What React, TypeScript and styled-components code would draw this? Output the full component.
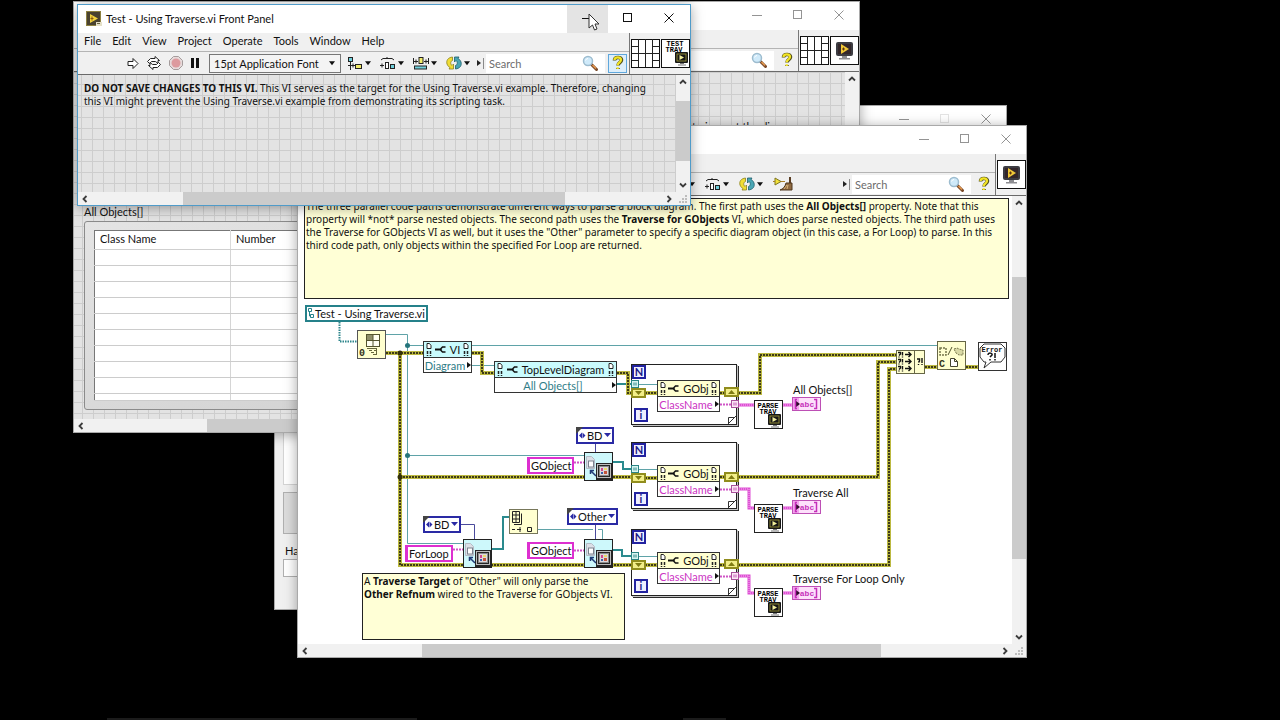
import React from "react";
import styled, { createGlobalStyle, css } from "styled-components";

const GlobalStyle = createGlobalStyle`
  * { box-sizing: border-box; }
  body { margin: 0; background: #000; }
  button, input, select { font: inherit; color: inherit; margin: 0; padding: 0; border: 0; border-radius: 0; background: none; }
  svg { flex: none; }
`;

const Desktop = styled.main`
  position: relative;
  min-height: 100vh;
  overflow: hidden;
  background: #000;
  color: #111;
  font: 11px/13px Lato, "Open Sans", sans-serif;
  font-variant-ligatures: none;
`;

/* ---------- window chrome ---------- */

const Win = styled.section<{ $x: number; $y: number; $w: number; $h: number; $active?: boolean }>`
  position: absolute;
  left: ${(p) => p.$x}px;
  top: ${(p) => p.$y}px;
  width: ${(p) => p.$w}px;
  min-height: ${(p) => p.$h}px;
  display: flex;
  flex-direction: column;
  background: #f0f0f0;
  border: 1px solid ${(p) => (p.$active ? "#4f9bc9" : "#a9a9a9")};
  box-shadow: 0 2px 12px rgba(0, 0, 0, 0.35);
`;

const TitleBar = styled.header`
  display: flex;
  align-items: center;
  height: 28px;
  padding-left: 8px;
  background: #fff;
  flex: none;
`;

const Title = styled.h1`
  margin: 0 auto 0 4px;
  padding-bottom: 1px;
  font-size: 11px;
  font-weight: 400;
  white-space: nowrap;
`;

const CaptionGroup = styled.div`
  display: flex;
  margin-left: auto;
  height: 100%;
`;

const CaptionButton = styled.button<{ $hover?: boolean; $faint?: boolean; $dim?: boolean }>`
  && {
    width: 41px;
    padding-bottom: 2px;
    display: grid;
    place-items: center;
    background: ${(p) => (p.$hover ? "#e4e4e4" : "transparent")};
    color: ${(p) => (p.$faint ? "#e4e4e4" : p.$dim ? "#949494" : "#111")};
  }
`;

const Chrome = styled.div`
  display: flex;
  border-bottom: 1px solid #6a6a6a;
  flex: none;
`;

const ChromeMain = styled.div`
  flex: 1;
  min-width: 0;
`;

const MenuBar = styled.nav`
  display: flex;
  gap: 11px;
  height: 19px;
  padding: 0 0 3px 6px;
  border-bottom: 1px solid #b4b4b4;
`;

const MenuItem = styled.button`
  white-space: nowrap;
`;

const Toolbar = styled.div`
  display: flex;
  align-items: center;
  height: 22px;
  padding-right: 2px;
`;

const ToolGroup = styled.div<{ $start: number; $gap: number }>`
  display: flex;
  align-items: center;
  gap: ${(p) => p.$gap}px;
  margin-left: ${(p) => p.$start}px;
`;

const ToolButton = styled.button`
  display: flex;
  align-items: center;
  gap: 2px;
`;

const SelectWrap = styled.label`
  position: relative;
  display: flex;
  margin-left: 10px;

  svg {
    position: absolute;
    right: 6px;
    top: 7px;
    pointer-events: none;
  }
`;

const FontSelect = styled.select`
  && {
    appearance: none;
    width: 132px;
    height: 19px;
    padding: 0 14px 0 4px;
    border: 1px solid #777;
    background: #f4f4f4;
  }
`;

const SearchGroup = styled.div`
  display: flex;
  align-items: center;
  margin-left: auto;
`;

const SearchDivider = styled.span`
  width: 1px;
  height: 11px;
  margin: 0 2px;
  background: #8a8a8a;
`;

const SearchField = styled.label`
  display: flex;
  align-items: center;
  width: 119px;
  height: 19px;
  padding: 0 7px 0 3px;
  background: #fff;

  input {
    width: 93px;
    outline: 0;
  }
  input::placeholder {
    color: #6c6c6c;
    opacity: 1;
  }
`;

const HelpButton = styled.button<{ $on?: boolean }>`
  && {
    display: grid;
    place-items: center;
    width: 19px;
    height: 19px;
    margin-left: 3px;
    border: 1px solid ${(p) => (p.$on ? "#5fa7dc" : "transparent")};
    background: ${(p) => (p.$on ? "#ddeefa" : "transparent")};
  }
`;

const IconPane = styled.div`
  display: flex;
  align-items: flex-start;
  padding: 5px 0 0 1px;
  border-left: 1px solid #777;
`;

const Body = styled.div`
  display: grid;
  grid-template-columns: minmax(0, 1fr) 14px;
  flex: 1;
`;

const panelGrid = css<{ $gx: number; $gy: number }>`
  background-color: #e3e3e3;
  background-image: linear-gradient(to right, #cdcdcd 1px, transparent 1px),
    linear-gradient(to bottom, #cdcdcd 1px, transparent 1px);
  background-size: 11px 11px;
  background-position: ${(p) => p.$gx}px ${(p) => p.$gy}px;
`;

const Panel = styled.div<{ $gx: number; $gy: number }>`
  overflow: hidden;
  ${panelGrid}
`;

const VBar = styled.div`
  display: flex;
  flex-direction: column;
  align-items: center;
  justify-content: space-between;
  background: #f1f1f1;
`;

const HBar = styled.div`
  display: flex;
  align-items: center;
  justify-content: space-between;
  height: 13px;
  background: #f1f1f1;
  flex: none;
`;

const ScrollButton = styled.button`
  display: grid;
  place-items: center;
  width: 14px;
  height: 14px;
  color: #3c3c3c;
`;

const Track = styled.div<{ $from: number; $size: number; $vertical?: boolean }>`
  flex: 1;
  align-self: stretch;
  display: flex;
  flex-direction: ${(p) => (p.$vertical ? "column" : "row")};

  &::before {
    content: "";
    flex: none;
    ${(p) => (p.$vertical ? "height" : "width")}: ${(p) => p.$from}%;
  }
  &::after {
    content: "";
    flex: none;
    background: #cbcbcb;
    ${(p) => (p.$vertical ? "height" : "width")}: ${(p) => p.$size}%;
  }
`;

const Line = styled.span`
  display: block;
  white-space: nowrap;
`;

/* ---------- panel contents ---------- */

const noteText = css`
  font-family: "Noto Sans", "Open Sans", sans-serif;
  font-size: 10px;
`;

const FrontNote = styled.p`
  margin: 0;
  padding: 7px 0 0 6px;
  ${noteText}
`;

const Hint = styled.p`
  margin: 0 0 72px;
  padding: 48px 0 0 618px;
  white-space: nowrap;
`;

const ListLabel = styled.div`
  margin: 0 0 3px 10px;
`;

const ListFrame = styled.div`
  margin: 0 24px 0 10px;
  padding: 8px 10px 8px 9px;
  border: 1px solid #8b8b8b;
  border-radius: 3px;
  background: linear-gradient(160deg, #e4e4e4, #c9c9c9);
`;

const ListTable = styled.table`
  width: 100%;
  border-collapse: collapse;
  table-layout: fixed;
  background: #fff;
  border-left: 1px solid #777;
  border-top: 1px solid #777;

  th {
    height: 19px;
    padding: 0 5px 3px;
    text-align: left;
    font-weight: 400;
    border-right: 1px solid #dadada;
    border-bottom: 1px solid #cfcfcf;
  }
  th:first-child {
    width: 136px;
  }
  td {
    height: 16px;
    padding: 0;
    border-right: 1px solid #d5d5d5;
    border-bottom: 1px solid #cccccc;
  }
  tr:last-child td {
    height: 7px;
  }
`;

const Dialog = styled.div`
  flex: 1;
  display: flex;
  flex-direction: column;
  justify-content: flex-end;
  padding: 0 9px 32px 8px;
`;

const DialogList = styled.div`
  height: 300px;
  border: 1px solid #d4d4d4;
  background: #fff;
`;

const DialogButton = styled.button`
  && {
    height: 42px;
    margin: 7px 0 10px;
    border: 1px solid #b0b0b0;
    background: #dcdcdc;
  }
`;

const DialogField = styled.label`
  display: flex;
  flex-direction: column;
  gap: 2px;
  padding-left: 2px;

  input {
    height: 18px;
    margin-left: -2px;
    border: 1px solid #b0b0b0;
    background: #fff;
  }
`;

/* ---------- block diagram ---------- */

/* Scroll position of the diagram inside its window. */
const ORIGIN = { x: 298, y: 196 };

const Canvas = styled.div`
  position: relative;
  overflow: hidden;
  background: #fff;
`;

const Wires = styled.svg`
  position: absolute;
  left: 0;
  top: 0;
`;

interface Spot {
  $x: number;
  $y: number;
}

const spot = css<Spot>`
  position: absolute;
  left: ${(p) => p.$x - ORIGIN.x}px;
  top: ${(p) => p.$y - ORIGIN.y}px;
`;

const Comment = styled.p<Spot & { $w: number; $h: number }>`
  ${spot}
  ${noteText}
  margin: 0;
  width: ${(p) => p.$w}px;
  height: ${(p) => p.$h}px;
  padding: 1px;
  border: 1px solid #222;
  background: #ffffd6;
`;

const RefConstant = styled.div<Spot>`
  ${spot}
  display: flex;
  align-items: center;
  gap: 1px;
  width: 123px;
  height: 17px;
  padding-left: 1px;
  border: 2px solid #25818a;
  background: #fff;
  white-space: nowrap;
`;

const Property = styled.div<Spot & { $w: number; $cream?: boolean; $ink: string }>`
  ${spot}
  width: ${(p) => p.$w}px;
  height: 32px;
  border: 1px solid #333;
  background: #fff;

  > div:first-child {
    display: flex;
    align-items: center;
    justify-content: space-between;
    height: 16px;
    padding: 0 2px;
    border-bottom: 1px solid #333;
    background: ${(p) => (p.$cream ? "#ffffd0" : "#c9fbfd")};
  }
  > div:last-child {
    display: flex;
    align-items: center;
    justify-content: flex-end;
    gap: 1px;
    height: 14px;
    color: ${(p) => p.$ink};
    white-space: nowrap;
  }
`;

const PropName = styled.span`
  display: flex;
  align-items: center;
  gap: 4px;
  white-space: nowrap;
`;

const PropField = styled.span`
  flex: 1;
  text-align: center;
`;

const LoopFrame = styled.div<Spot & { $h: number }>`
  ${spot}
  width: 106px;
  height: ${(p) => p.$h}px;
  border: 1px solid #222;
  box-shadow: 1px 1px 0 #c4c4c4, 2px 2px 0 #2a2a2a;
  display: flex;
  flex-direction: column;
  justify-content: space-between;
  padding-bottom: 2px;
`;

const Terminal = styled.span<{ $inset?: boolean }>`
  display: grid;
  place-items: center;
  width: 14px;
  height: 14px;
  margin-left: ${(p) => (p.$inset ? 2 : 0)}px;
  border: 2px solid #2222a0;
  background: #eef;
  color: #1a1a88;
  font-size: 11px;
  line-height: 10px;
  font-weight: 700;
`;

const NodeIcon = styled.svg<Spot>`
  ${spot}
  overflow: visible;
`;

const StringConstant = styled.input<Spot & { $w: number }>`
  && {
    ${spot}
    width: ${(p) => p.$w}px;
    height: 17px;
    padding: 0 0 0 1px;
    border: 2px solid #dd2fd0;
    border-left-width: 3px;
    background: #fff;
    outline: 0;
  }
`;

const RingLabel = styled.label<Spot & { $w: number }>`
  ${spot}
  width: ${(p) => p.$w}px;
  height: 17px;

  select {
    appearance: none;
    width: 100%;
    height: 100%;
    padding: 0 0 0 9px;
    border: 2px solid #2a2aa4;
    background: #fff;
  }
  svg {
    position: absolute;
    left: 0;
    top: 0;
    pointer-events: none;
  }
`;

const WireLabel = styled.span<Spot>`
  ${spot}
  white-space: nowrap;
`;

const Cursor = styled.svg`
  position: absolute;
  left: 588px;
  top: 13px;
`;

const TaskEdge = styled.footer`
  position: absolute;
  left: 107px;
  bottom: 0;
  display: flex;
  gap: 266px;

  span {
    width: 310px;
    height: 2px;
    background: #1b1b1b;
  }
  span + span {
    width: 43px;
  }
`;

/* ---------- icons ---------- */

const Caret = ({ color = "#111", size = 7 }: { color?: string; size?: number }) => (
  <svg width={size} height="5" viewBox="0 0 7 5">
    <path d="M0 0h7L3.5 4.5z" fill={color} />
  </svg>
);

const AppIcon = () => (
  <svg width="16" height="16" viewBox="0 0 16 16">
    <rect x="0.5" y="0.5" width="14" height="14" fill="#4a4230" stroke="#8d8141" />
    <path d="M4 3v9l8-4.5z" fill="#f3d33c" />
    <path d="M6 5.5v4M4.5 7.500h3" stroke="#8a5a10" />
    <path d="M10 11h6v4h-6z" fill="#e5e0c8" />
    <path d="M11 12.500h3" stroke="#6c6440" />
  </svg>
);

const Magnifier = () => (
  <svg width="16" height="16" viewBox="0 0 16 16">
    <path d="M9.500 9.500l5 5" stroke="#7a4a2a" strokeWidth="3" strokeLinecap="round" />
    <path d="M10.500 10l3.500 3.500" stroke="#e79a4e" strokeWidth="1.500" />
    <circle cx="6" cy="6" r="4.500" fill="#cfeafa" stroke="#9dbccf" strokeWidth="1.500" />
    <path d="M3.500 5.500a3 3 0 0 1 2.500-2" stroke="#fff" fill="none" />
  </svg>
);

const Question = () => (
  <svg width="12" height="16" viewBox="0 0 12 16">
    <path d="M2.500 5.500C2.500 1.500 9.500 1.500 9.500 5c0 2.500-3.500 2.500-3.500 5.500M6 13v1" fill="none" stroke="#55521c" strokeWidth="3.600" />
    <path d="M2.500 5C2.500 1.500 9 1.500 9 5c0 2.300-3.300 2.500-3.300 5.300M5.700 12.300v1.700" fill="none" stroke="#f2e424" strokeWidth="2.200" />
  </svg>
);

const RunIcon = () => (
  <svg width="12" height="13" viewBox="0 0 12 13">
    <path d="M1 4.500h5V1.500l5 5-5 5v-3H1z" fill="#fff" stroke="#222" />
  </svg>
);

const RunContinuousIcon = () => (
  <svg width="14" height="14" viewBox="0 0 14 14">
    <path d="M.5 5.500L3.500 2.500h4.500V.5l4.500 4H11v3L8.500 5.500h-4L2.500 7.500z" fill="#fff" stroke="#222" strokeLinejoin="round" />
    <path d="M13.500 8.500l-3 3H6v2l-4.500-4H3v-3L5.500 8.500h4l2-2z" fill="#fff" stroke="#222" strokeLinejoin="round" />
  </svg>
);

const AbortIcon = () => (
  <svg width="14" height="14" viewBox="0 0 14 14">
    <path d="M4.500 .5h5l4 4v5l-4 4h-5l-4-4v-5z" fill="#e6dada" stroke="#a59c9c" />
    <circle cx="7" cy="7" r="4.500" fill="#dd9a9e" />
  </svg>
);

const PauseIcon = () => (
  <svg width="8" height="10" viewBox="0 0 8 10">
    <path d="M0 0h3v10H0zM5 0h3v10H5z" fill="#111" />
  </svg>
);

const AlignIcon = () => (
  <svg width="15" height="13" viewBox="0 0 15 13">
    <path d="M2.500 4v9M0 8.500h7M5 6.500v4" stroke="#222" fill="none" />
    <rect x="0.5" y="0.5" width="4" height="4" fill="#6fd0dc" stroke="#222" />
    <rect x="7.500" y="7.500" width="6" height="4" fill="#f2ec6a" stroke="#222" />
  </svg>
);

const DistributeIcon = () => (
  <svg width="16" height="13" viewBox="0 0 16 13">
    <path d="M1 3l2-1.500h9L14 3M7 0v1.500" stroke="#222" fill="none" />
    <path d="M0 8.500h4M2 6.500v4" stroke="#222" />
    <rect x="5.500" y="5.500" width="3" height="6" fill="#fff" stroke="#222" />
    <rect x="10.500" y="7.500" width="4" height="4" fill="#6fd0dc" stroke="#222" />
  </svg>
);

const ResizeIcon = () => (
  <svg width="16" height="13" viewBox="0 0 16 13">
    <path d="M.5 1v6M15.500 1v6M1 4.500h4M11 4.500h4M3 2.500v4M13 2.500v4" stroke="#222" fill="none" />
    <rect x="6" y="0.5" width="4" height="6" fill="#f2ec6a" stroke="#222" />
    <rect x="1.500" y="9" width="12" height="3" fill="#6fd0dc" stroke="#222" />
  </svg>
);

const ReorderIcon = () => (
  <svg width="16" height="14" viewBox="0 0 16 14">
    <path d="M6.500 1C2 1.500 0 4.500 1 8c.7 2 2 3 3 3.500L3 13h4.500V8L6 9.500C4 8 4.500 5 6.500 4.500z" fill="#f0dd35" stroke="#8a8120" strokeWidth="0.800" />
    <path d="M9.500 13c4.500-.5 6.500-3.500 5.500-7-.7-2-2-3-3-3.500L13 1H8.500v5L10 4.500C12 6 11.500 9 9.500 9.500z" fill="#4aa6b4" stroke="#1d5e6b" strokeWidth="0.800" />
  </svg>
);

const CleanupIcon = () => (
  <svg width="20" height="14" viewBox="0 0 20 14">
    <path d="M2 1v7l6-3.500z" fill="#f3e23a" stroke="#7d7420" />
    <path d="M0 4.500h2M8 4.500h4" stroke="#a98028" />
    <path d="M17 0v6" stroke="#5a3d22" strokeWidth="2" />
    <path d="M13 6h6v7H7c3-1 5-3 6-7z" fill="#8f6a41" stroke="#4e361e" />
    <path d="M11 12l3-4M14 12l1-4" stroke="#d9b27a" />
  </svg>
);

const PaneIcon = () => (
  <svg width="30" height="30" viewBox="0 0 30 30">
    <rect x="0.5" y="1.500" width="28" height="28" fill="#fff" stroke="#111" />
    <path d="M7.500 1v28M14.500 1v28M21.500 1v28M7 15.500h15M1 8.500h7M1 15.500h7M1 22.500h7M21 8.500h8M21 15.500h8M21 22.500h8" stroke="#222" fill="none" />
  </svg>
);

const ViIcon = () => (
  <svg width="29" height="30" viewBox="0 0 29 30">
    <rect x="0.5" y="1.500" width="28" height="28" fill="#fff" stroke="#111" />
    <rect x="6" y="7" width="17" height="14" rx="2" fill="#3c3c42" />
    <rect x="8" y="9" width="13" height="10" fill="#33262a" />
    <path d="M11 9v10l8-5z" fill="#f0c838" />
    <path d="M12 14h3M13.500 12.500v3" stroke="#5e3410" />
    <path d="M12 21h5v2h3v1.500H9V23h3z" fill="#8e8e92" />
  </svg>
);

const SmallMonitor = () => (
  <>
    <rect x="14" y="14" width="13" height="11" rx="1" fill="#161616" />
    <rect x="16" y="16" width="9" height="7" fill="none" stroke="#a9a13a" strokeWidth="0.800" />
    <path d="M18.500 17v5l4.500-2.500z" fill="#f2ef9a" />
    <path d="M17 27h8M19 25.500h4" stroke="#777" />
  </>
);

const tinyText = {
  fontFamily: "Liberation Mono, monospace",
  fontWeight: 700,
  fontSize: 7,
  textAnchor: "middle" as const,
};

const TestTravIcon = () => (
  <svg width="29" height="30" viewBox="0 0 29 30">
    <rect x="0.5" y="1.500" width="28" height="28" fill="#fff" stroke="#111" />
    <text x="14" y="8" {...tinyText}>TEST</text>
    <text x="13" y="14" {...tinyText}>TRAV</text>
    <SmallMonitor />
  </svg>
);

const Chevron = ({ dir }: { dir: "up" | "down" | "left" | "right" }) => {
  const d = {
    up: "M1 5.500L4 2.500l3 3",
    down: "M1 2.500l3 3 3-3",
    left: "M5.500 1l-3 3 3 3",
    right: "M2.500 1l3 3-3 3",
  }[dir];
  return (
    <svg width="8" height="8" viewBox="0 0 8 8">
      <path d={d} fill="none" stroke="currentColor" strokeWidth="1.800" />
    </svg>
  );
};

const Grip = () => (
  <svg width="10" height="10" viewBox="0 0 10 10">
    <path d="M7 1h2v2H7zM7 4h2v2H7zM7 7h2v2H7zM4 4h2v2H4zM4 7h2v2H4zM1 7h2v2H1z" fill="#bdbdbd" />
  </svg>
);

/* ---------- shared pieces ---------- */

const Captions = ({ hover, faintMax, dim }: { hover?: boolean; faintMax?: boolean; dim?: boolean }) => (
  <CaptionGroup>
    <CaptionButton aria-label="Minimize" $hover={hover} $dim={dim}>
      <svg width="10" height="10"><path d="M0 5.500h10" stroke="currentColor" /></svg>
    </CaptionButton>
    <CaptionButton aria-label="Maximize" $faint={faintMax} $dim={dim}>
      <svg width="10" height="10"><rect x="0.5" y="0.5" width="8" height="8" fill="none" stroke="currentColor" /></svg>
    </CaptionButton>
    <CaptionButton aria-label="Close" $dim={dim}>
      <svg width="10" height="10"><path d="M.5.5l9 9M9.500.5l-9 9" stroke="currentColor" /></svg>
    </CaptionButton>
  </CaptionGroup>
);

const Search = ({ helpOn }: { helpOn?: boolean }) => (
  <SearchGroup>
    <svg width="4" height="6"><path d="M0 0v6l4-3z" fill="#222" /></svg>
    <SearchDivider />
    <SearchField>
      <input type="text" placeholder="Search" aria-label="Search" />
      <Magnifier />
    </SearchField>
    <HelpButton $on={helpOn} aria-label="Context help"><Question /></HelpButton>
  </SearchGroup>
);

const VScroll = ({ from, size }: { from: number; size: number }) => (
  <VBar>
    <ScrollButton aria-label="Scroll up"><Chevron dir="up" /></ScrollButton>
    <Track $vertical $from={from} $size={size} />
    <ScrollButton aria-label="Scroll down"><Chevron dir="down" /></ScrollButton>
  </VBar>
);

const HScroll = ({ from, size }: { from: number; size: number }) => (
  <HBar>
    <ScrollButton aria-label="Scroll left"><Chevron dir="left" /></ScrollButton>
    <Track $from={from} $size={size} />
    <ScrollButton aria-label="Scroll right"><Chevron dir="right" /></ScrollButton>
    <ScrollButton as="span"><Grip /></ScrollButton>
  </HBar>
);

/* ---------- diagram nodes ---------- */

const PortMarks = () => (
  <svg width="6" height="14" viewBox="0 0 6 14">
    <path d="M1 .5h2.500l1.500 2V5.500H1z" fill="#fff" stroke="#222" />
    <path d="M1.500 8v3M1.500 12v1M4.500 8v3M4.500 12v1" stroke="#222" strokeWidth="1.500" />
  </svg>
);

const Plug = () => (
  <svg width="11" height="7" viewBox="0 0 11 7">
    <path d="M0 3.500h6" stroke="#111" strokeWidth="2" />
    <path d="M10.500 1H7.500L6 2.500v2L7.500 6h3" fill="none" stroke="#111" strokeWidth="1.500" />
  </svg>
);

interface PropertyProps {
  x: number;
  y: number;
  w: number;
  name: string;
  field: string;
  cream?: boolean;
  ink?: string;
}

const PropertyNode = ({ x, y, w, name, field, cream, ink = "#2f7d87" }: PropertyProps) => (
  <Property $x={x} $y={y} $w={w} $cream={cream} $ink={ink}>
    <div>
      <PortMarks />
      <PropName><Plug />{name}</PropName>
      <PortMarks />
    </div>
    <div>
      <PropField>{field}</PropField>
      <svg width="4" height="6"><path d="M0 0v6l4-3z" fill="#111" /></svg>
    </div>
  </Property>
);

const ForLoop = ({ y, node, h }: { y: number; node: number; h: number }) => (
  <>
    <LoopFrame $x={631} $y={y} $h={h}>
      <Terminal>N</Terminal>
      <Terminal $inset>i</Terminal>
    </LoopFrame>
    <PropertyNode x={657} y={node} w={63} name="GObj" field="ClassName" cream ink="#cb33c3" />
    <NodeIcon $x={631} $y={node} width="109" height="48" viewBox="0 0 109 48">
      <rect x="0.5" y="0.5" width="7" height="7" fill="#d8f4f0" stroke="#2a8585" />
      <path d="M3 2.500v3M5 2.500v3" stroke="#2a8585" />
      <rect x="1" y="9" width="13" height="8" fill="#f2ee88" stroke="#918d1d" strokeWidth="2" />
      <path d="M4 11h7l-3.500 4z" fill="#807c12" />
      <rect x="94" y="8" width="13" height="8" fill="#f2ee88" stroke="#918d1d" strokeWidth="2" />
      <path d="M97 14h7l-3.500-4z" fill="#807c12" />
      <rect x="100.500" y="20.500" width="7" height="7" fill="#fbe6f6" stroke="#a8509a" />
      <path d="M103 22.500v3M105 22.500v3" stroke="#c050b0" />
    </NodeIcon>
    <NodeIcon $x={728} $y={y + h - 9} width="8" height="8" viewBox="0 0 8 8">
      <path d="M0.500 7.500V1.500H6.500M8 0L0 8" fill="none" stroke="#333" />
    </NodeIcon>
  </>
);

const ParseNode = ({ y }: { y: number }) => (
  <NodeIcon $x={754} $y={y} width="29" height="29" viewBox="0 0 29 29">
    <rect x="0.5" y="0.5" width="28" height="28" fill="#fff" stroke="#222" />
    <text x="14" y="8" {...tinyText}>PARSE</text>
    <text x="14" y="14" {...tinyText}>TRAV</text>
    <SmallMonitor />
  </NodeIcon>
);

const AbcIndicator = ({ y }: { y: number }) => (
  <NodeIcon $x={792} $y={y} width="29" height="14" viewBox="0 0 29 14">
    <rect x="0.5" y="0.5" width="28" height="13" fill="#fde0fb" stroke="#bd4fb5" />
    <rect x="1" y="1" width="6" height="12" fill="#f3a2ee" />
    <path d="M4 4v6l4-3z" fill="#2e0a2c" />
    <text x="15" y="10" fill="#c52fba" {...tinyText} fontSize="8">abc</text>
    <path d="M5 2.500H3.500v9H5M22 2.500h2.500v9H22" stroke="#c52fba" strokeWidth="1.500" fill="none" />
  </NodeIcon>
);

const TraverseNode = ({ x, y }: { x: number; y: number }) => (
  <NodeIcon $x={x} $y={y} width="29" height="29" viewBox="0 0 29 29">
    <rect x="0.5" y="0.5" width="28" height="28" fill="#cdf8fb" stroke="#222" />
    <path d="M2.500 4.500h5l3 3v9h-8z" fill="#dcdfe6" stroke="#b4bcc6" />
    <rect x="4.500" y="9" width="5" height="6" fill="#fff" stroke="#7a838e" />
    <path d="M7 19l5 5M6.500 22v-3.500H10" stroke="#1f3a76" fill="none" strokeWidth="1.500" />
    <rect x="12" y="11" width="16" height="17" fill="#252525" />
    <rect x="13.500" y="12.500" width="13" height="13" fill="none" stroke="#bdbdbd" />
    <rect x="15.500" y="14.500" width="9" height="9" fill="#dcd8dc" stroke="#8b8b8b" />
    <path d="M17 16h2v3h-2z" fill="#d0468c" />
    <path d="M20 19h3v3h-3z" fill="#c4553c" />
    <path d="M17 20h2v2h-2z" fill="#3a5fa8" />
    <path d="M20 16h3v2h-3z" fill="#e9d96a" />
  </NodeIcon>
);

const RingConstant = ({ x, y, w, value }: { x: number; y: number; w: number; value: string }) => (
  <RingLabel $x={x} $y={y} $w={w}>
    <select aria-label="Traverse target" defaultValue={value}>
      <option>{value}</option>
    </select>
    <svg width={w} height="17">
      <path d="M0 0h7L0 7z" fill="#444" />
      <path d="M3 8.500l3-3v6zM9.500 8.500l-3-3v6z" fill="#2a2aa4" />
      <path d={`M${w - 10} 6h7l-3.500 4z`} fill="#2a2aa4" />
    </svg>
  </RingLabel>
);

const errorWires = [
  "M386 353H423",
  "M400 353V565H631",
  "M400 477H631",
  "M472 353H482V373H494",
  "M617 373H628V393H657",
  "M645 478H657",
  "M645 565H657",
  "M720 393H760V355H896",
  "M720 477H878V362H896",
  "M720 565H889V369H896",
  "M925 367H937",
  "M966 367H978",
];

const stringWires = [
  "M739 405H754",
  "M739 489H749V508H754",
  "M739 576H749V593H754",
  "M783 405H792",
  "M783 508H792",
  "M783 593H792",
];

const thinStringWires = [
  "M720 404.500H732",
  "M720 489.500H732",
  "M720 576.500H732",
  "M574 462.500H584",
  "M453 549.500H463",
  "M574 550.500H584",
];

const refWires = [
  "M386 334.500H407.500V543.500H463",
  "M407 345.500H423",
  "M472 345.500H937",
  "M407 455.500H584",
  "M472 365.500H494",
  "M639 384.500H657",
  "M639 469.500H657",
  "M639 556.500H657",
  "M538 529.500H593M598 529.500H602.500V539",
];

const arrayWires = [
  "M617 384H631",
  "M613 462H623V469H631",
  "M613 550H622V556H631",
  "M492 549H503V517H510",
];

const enumWires = ["M595.500 443V452", "M461 524.500H474.500V539", "M595.500 524V539"];

const DiagramWires = () => (
  <Wires width="716" height="447" viewBox={`${ORIGIN.x} ${ORIGIN.y} 716 447`} fill="none">
    <path d={refWires.join("")} stroke="#5fa3a8" />
    <path d={arrayWires.join("")} stroke="#2a8a8e" strokeWidth="2" />
    <path d="M339.500 322V341.500H357" stroke="#2f868c" strokeWidth="2" strokeDasharray="1.500 1" />
    <path d={enumWires.join("")} stroke="#4a4a9c" />
    <path d={errorWires.join("")} stroke="#bcb941" strokeWidth="4" />
    <path d={errorWires.join("")} stroke="#3d3a18" strokeWidth="2" strokeDasharray="2 1" />
    <path d={stringWires.join("")} stroke="#de4fd4" strokeWidth="3" />
    <path d={stringWires.join("")} stroke="#f5b4f0" strokeWidth="1" strokeDasharray="1 1" />
    <path d={thinStringWires.join("")} stroke="#cf55c6" strokeWidth="2" strokeDasharray="2 1" />
    <circle cx="407.500" cy="345.500" r="2.500" fill="#25757c" />
    <circle cx="407.500" cy="455.500" r="2.500" fill="#25757c" />
    <circle cx="400" cy="353" r="2.500" fill="#333009" />
    <circle cx="400" cy="477" r="2.500" fill="#333009" />
  </Wires>
);

const BlockDiagram = () => (
  <Canvas>
    <DiagramWires />
    <Comment $x={304} $y={198} $w={705} $h={101}>
      <Line>The three parallel code paths demonstrate different ways to parse a block diagram. The first path uses the <b>All Objects[]</b> property. Note that this</Line>
      <Line>property will *not* parse nested objects. The second path uses the <b>Traverse for GObjects</b> VI, which does parse nested objects. The third path uses</Line>
      <Line>the Traverse for GObjects VI as well, but it uses the "Other" parameter to specify a specific diagram object (in this case, a For Loop) to parse. In this</Line>
      <Line>third code path, only objects within the specified For Loop are returned.</Line>
    </Comment>

    <RefConstant $x={305} $y={305}>
      <svg width="6" height="11" viewBox="0 0 6 11">
        <path d="M.5.5h3v3h-3zM2.500 6.500h3v3h-3zM1.500 4v4h1" fill="none" stroke="#25818a" />
      </svg>
      Test - Using Traverse.vi
    </RefConstant>

    <NodeIcon $x={357} $y={330} width="29" height="29" viewBox="0 0 29 29">
      <rect x="0.5" y="0.5" width="28" height="28" fill="#ffffcf" stroke="#555" />
      <rect x="9.500" y="4.500" width="13" height="12" fill="#fffff0" stroke="#55552e" />
      <path d="M10 5h6v5h-6z" fill="#8e8e68" />
      <path d="M16 4.500v12M9.500 10.500h13" stroke="#55552e" />
      <path d="M10 18.500h10M12 20.500h3M17 20.500h3M14 22.500h3M19.500 18v7M16 24.500h3" stroke="#66663c" />
      <text x="5" y="26" {...tinyText} fontSize="10" fill="#33331a">0</text>
    </NodeIcon>

    <PropertyNode x={423} y={341} w={49} name="VI" field="Diagram" />
    <PropertyNode x={494} y={361} w={123} name="TopLevelDiagram" field="All Objects[]" />

    <ForLoop y={364} node={380} h={61} />
    <ForLoop y={442} node={465} h={67} />
    <ForLoop y={529} node={552} h={67} />

    <RingConstant x={576} y={427} w={38} value="BD" />
    <StringConstant $x={527} $y={457} $w={47} defaultValue="GObject" aria-label="Class name" />
    <TraverseNode x={584} y={452} />

    <RingConstant x={423} y={516} w={38} value="BD" />
    <StringConstant $x={405} $y={545} $w={48} defaultValue="ForLoop" aria-label="Class name" />
    <TraverseNode x={463} y={539} />

    <NodeIcon $x={509} $y={509} width="29" height="25" viewBox="0 0 29 25">
      <rect x="0.5" y="0.5" width="28" height="24" fill="#ffffd0" stroke="#77775a" />
      <path d="M3.500 2.500h7v11h-7zM7 2.500v11M3.500 6h7M3.500 10h7M5 15.500h7.500v-11" fill="none" stroke="#222" />
      <path d="M3 20.500h3M8 20.500h4M11 18v5M18.500 18.500h4v4h-4z" fill="none" stroke="#222" />
    </NodeIcon>

    <RingConstant x={567} y={508} w={51} value="Other" />
    <StringConstant $x={527} $y={542} $w={47} defaultValue="GObject" aria-label="Class name" />
    <TraverseNode x={584} y={539} />

    <WireLabel $x={793} $y={383}>All Objects[]</WireLabel>
    <ParseNode y={400} />
    <AbcIndicator y={397} />
    <WireLabel $x={793} $y={486}>Traverse All</WireLabel>
    <ParseNode y={504} />
    <AbcIndicator y={500} />
    <WireLabel $x={793} $y={572}>Traverse For Loop Only</WireLabel>
    <ParseNode y={588} />
    <AbcIndicator y={586} />

    <NodeIcon $x={896} $y={350} width="29" height="24" viewBox="0 0 29 24">
      <rect x="0.5" y="0.5" width="28" height="23" fill="#ffffd0" stroke="#666646" />
      <path d="M18.500 0v24" stroke="#666646" />
      {[0, 7, 14].map((dy) => (
        <g key={dy} transform={`translate(0 ${dy})`} stroke="#111" strokeWidth="1.400" fill="none">
          <path d="M2 2.500h2.500v1.500l-1.500 1.500M3 6.500v1M6.500 2v3.500M6.500 6.500v1" />
          <path d="M9 4.500h6M12.500 2l2.500 2.500L12.500 7" />
        </g>
      ))}
      <path d="M21 9h2.500v2l-1 1.500M22.500 14v1M26 8v5M26 14v1" stroke="#111" strokeWidth="1.400" fill="none" />
    </NodeIcon>

    <NodeIcon $x={937} $y={341} width="29" height="29" viewBox="0 0 29 29">
      <rect x="0.5" y="0.5" width="28" height="28" fill="#ffffcf" stroke="#666646" />
      <rect x="3" y="7" width="6" height="7" fill="none" stroke="#77774c" strokeWidth="1.500" strokeDasharray="2 1" />
      <path d="M11 14l4-8" stroke="#55552e" />
      <path d="M17 8l3-1 2 1 4 1v5h-4l-3-2z" fill="#d8d8a4" stroke="#77774c" strokeDasharray="2 1" />
      <text x="5" y="26" {...tinyText} fontSize="10" fill="#33331a">C</text>
      <path d="M13.500 17.500h4l3 3v5h-7zM17.500 17.500v3h3" fill="#fff" stroke="#444430" />
    </NodeIcon>

    <NodeIcon $x={978} $y={342} width="29" height="29" viewBox="0 0 29 29">
      <rect x="0.5" y="0.5" width="28" height="28" fill="#fff" stroke="#333" />
      <path d="M6 2h17l4 4v9l-4 5H13l-7 6 2-6H6l-4-5V6z" fill="#fff" stroke="#333" />
      <text x="14" y="10" {...tinyText} fill="#111">Error</text>
      <path d="M10 13c0-3 5-2 4 0l-2 2M12 17v1.500M17 11v5M17 17v1.500" fill="none" stroke="#111" strokeWidth="1.500" />
    </NodeIcon>

    <Comment $x={362} $y={573} $w={263} $h={67}>
      <Line>A <b>Traverse Target</b> of "Other" will only parse the</Line>
      <Line><b>Other Refnum</b> wired to the Traverse for GObjects VI.</Line>
    </Comment>
  </Canvas>
);

/* ---------- page ---------- */

const menus = ["File", "Edit", "View", "Project", "Operate", "Tools", "Window", "Help"];
const rows = Array.from({ length: 10 }, (_, i) => i);

export default function App() {
  return (
    <Desktop>
      <GlobalStyle />

      <Win $x={274} $y={105} $w={733} $h={505}>
        <TitleBar><Captions dim faintMax /></TitleBar>
        <Dialog>
          <DialogList />
          <DialogButton aria-label="Run" />
          <DialogField>
            Ha
            <input type="text" />
          </DialogField>
        </Dialog>
      </Win>

      <Win $x={73} $y={1} $w={787} $h={432}>
        <TitleBar><Captions dim /></TitleBar>
        <Chrome>
          <ChromeMain>
            <MenuBar />
            <Toolbar><Search /></Toolbar>
          </ChromeMain>
          <IconPane><PaneIcon /><ViIcon /></IconPane>
        </Chrome>
        <Body>
          <Panel $gx={8} $gy={0}>
            <Hint>to inspect the di</Hint>
            <ListLabel>All Objects[]</ListLabel>
            <ListFrame>
              <ListTable>
                <thead>
                  <tr><th>Class Name</th><th>Number</th></tr>
                </thead>
                <tbody>
                  {rows.map((r) => <tr key={r}><td /><td /></tr>)}
                </tbody>
              </ListTable>
            </ListFrame>
          </Panel>
          <VScroll from={20} size={50} />
        </Body>
        <HScroll from={16} size={60} />
      </Win>

      <Win $x={297} $y={125} $w={730} $h={533}>
        <TitleBar><Captions dim /></TitleBar>
        <Chrome>
          <ChromeMain>
            <MenuBar />
            <Toolbar>
              <ToolGroup $start={391} $gap={10}>
                <ToolButton aria-label="Align objects"><Caret size={6} /></ToolButton>
                <ToolButton aria-label="Distribute objects"><DistributeIcon /><Caret size={6} /></ToolButton>
                <ToolButton aria-label="Reorder"><ReorderIcon /><Caret size={6} /></ToolButton>
                <ToolButton aria-label="Clean up diagram"><CleanupIcon /></ToolButton>
              </ToolGroup>
              <Search />
            </Toolbar>
          </ChromeMain>
          <IconPane><ViIcon /></IconPane>
        </Chrome>
        <Body>
          <BlockDiagram />
          <VScroll from={16} size={67} />
        </Body>
        <HScroll from={16} size={67} />
      </Win>

      <Win $x={77} $y={4} $w={614} $h={202} $active>
        <TitleBar>
          <AppIcon />
          <Title>Test - Using Traverse.vi Front Panel</Title>
          <Captions hover />
        </TitleBar>
        <Chrome>
          <ChromeMain>
            <MenuBar>
              {menus.map((m) => <MenuItem key={m}>{m}</MenuItem>)}
            </MenuBar>
            <Toolbar>
              <ToolGroup $start={49} $gap={8}>
                <ToolButton aria-label="Run"><RunIcon /></ToolButton>
                <ToolButton aria-label="Run continuously"><RunContinuousIcon /></ToolButton>
                <ToolButton aria-label="Abort"><AbortIcon /></ToolButton>
                <ToolButton aria-label="Pause"><PauseIcon /></ToolButton>
              </ToolGroup>
              <SelectWrap>
                <FontSelect aria-label="Text settings">
                  <option>15pt Application Font</option>
                </FontSelect>
                <Caret size={6} />
              </SelectWrap>
              <ToolGroup $start={7} $gap={9}>
                <ToolButton aria-label="Align objects"><AlignIcon /><Caret size={6} /></ToolButton>
                <ToolButton aria-label="Distribute objects"><DistributeIcon /><Caret size={6} /></ToolButton>
                <ToolButton aria-label="Resize objects"><ResizeIcon /><Caret size={6} /></ToolButton>
                <ToolButton aria-label="Reorder"><ReorderIcon /><Caret size={6} /></ToolButton>
              </ToolGroup>
              <Search helpOn />
            </Toolbar>
          </ChromeMain>
          <IconPane><PaneIcon /><TestTravIcon /></IconPane>
        </Chrome>
        <Body>
          <Panel $gx={3} $gy={9}>
            <FrontNote>
              <Line><b>DO NOT SAVE CHANGES TO THIS VI.</b> This VI serves as the target for the Using Traverse.vi example. Therefore, changing</Line>
              <Line>this VI might prevent the Using Traverse.vi example from demonstrating its scripting task.</Line>
            </FrontNote>
          </Panel>
          <VScroll from={14} size={67} />
        </Body>
        <HScroll from={16} size={67} />
      </Win>

      <Cursor width="12" height="19" viewBox="0 0 12 19">
        <path d="M1 1v14l3.500-3 2 5 2.500-1-2-5H11z" fill="#fff" stroke="#333" />
      </Cursor>

      <TaskEdge><span /><span /></TaskEdge>
    </Desktop>
  );
}
